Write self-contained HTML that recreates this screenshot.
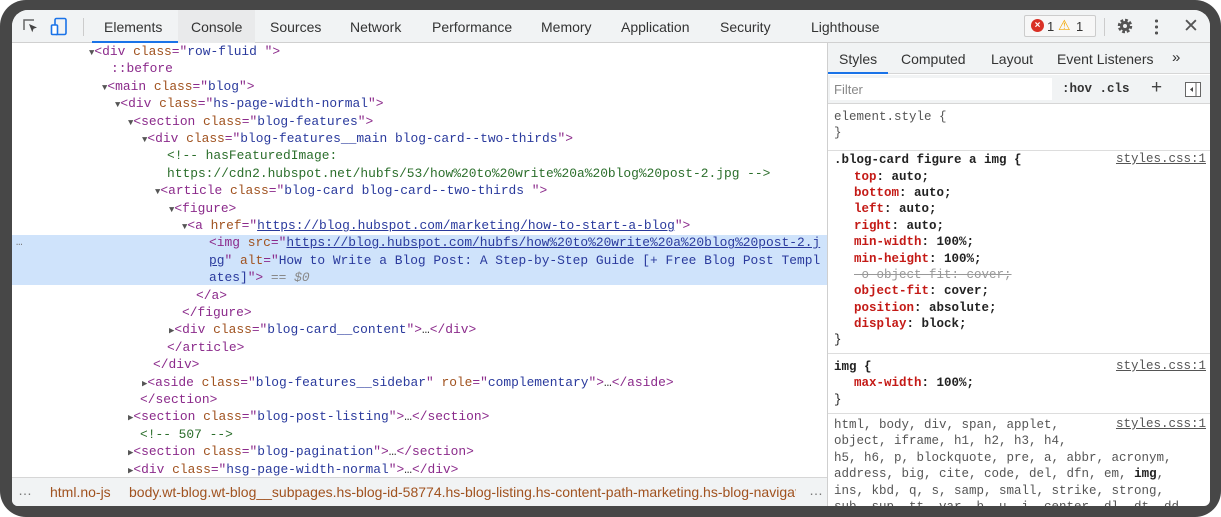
<!DOCTYPE html>
<html><head><meta charset="utf-8">
<style>
*{margin:0;padding:0;box-sizing:border-box}
body{width:1221px;height:517px;background:#fff;position:relative;overflow:hidden;font-family:"Liberation Sans",sans-serif}
.frame{position:absolute;left:0;top:0;width:1221px;height:517px;background:#474747;border-radius:26px}
.inner{position:absolute;left:12px;top:10px;width:1198px;height:496px;background:#fff;border-radius:16px 16px 6px 6px;overflow:hidden}
.tabs{position:absolute;left:0;top:0;width:1198px;height:33px;background:#f1f3f4;border-bottom:1px solid #d0d0d0}
.tab{position:absolute;top:9px;font-size:14px;color:#333}
.m{font-family:"Liberation Mono",monospace;font-size:12.9px;white-space:pre;position:absolute;line-height:17px;color:#333}
.t{color:#8b2a8b}.a{color:#a0521f}.v{color:#2a3a9d}.c{color:#2b6e2b}.u{color:#2a3a9d;text-decoration:underline}
.s{font-family:"Liberation Mono",monospace;font-size:12.5px;white-space:pre;position:absolute;line-height:16.4px;color:#222}
.p{color:#c41a16}
.tri{font-size:9px;color:#555}
.link{position:absolute;right:4px;text-decoration:underline;color:#555;font-family:"Liberation Mono",monospace;font-size:12.5px}
</style></head><body>
<div class="frame"></div>
<div class="inner">
 <div class="tabs">
  <svg style="position:absolute;left:10px;top:8px" width="18" height="18" viewBox="0 0 18 18"><path d="M2 12V2h10" fill="none" stroke="#666" stroke-width="1.5"/><path d="M7 6l8 3.5-3.5 1.2-1.2 3.5z" fill="#444"/></svg>
  <svg style="position:absolute;left:38px;top:7px" width="18" height="20" viewBox="0 0 18 20"><rect x="5" y="1.5" width="11" height="16" rx="1.5" fill="none" stroke="#1a73e8" stroke-width="1.6"/><rect x="1.5" y="8" width="6" height="9.5" rx="1" fill="#fff" stroke="#1a73e8" stroke-width="1.6"/></svg>
  <div style="position:absolute;left:71px;top:8px;width:1px;height:18px;background:#ccc"></div>
  <div class="tab" style="left:92px">Elements</div>
  <div style="position:absolute;left:80px;top:31px;width:86px;height:2px;background:#1a73e8"></div>
  <div style="position:absolute;left:166px;top:0;width:77px;height:33px;background:#e9eaeb"></div>
  <div class="tab" style="left:179px">Console</div>
  <div class="tab" style="left:258px">Sources</div>
  <div class="tab" style="left:338px">Network</div>
  <div class="tab" style="left:420px">Performance</div>
  <div class="tab" style="left:529px">Memory</div>
  <div class="tab" style="left:609px">Application</div>
  <div class="tab" style="left:708px">Security</div>
  <div class="tab" style="left:799px">Lighthouse</div>
  <div style="position:absolute;left:1012px;top:5px;width:72px;height:22px;border:1px solid #ccc;border-radius:2px;background:#f7f7f7;font-size:13px;color:#333">
   <span style="position:absolute;left:6px;top:3px;width:13px;height:13px;border-radius:50%;background:#d93025;color:#fff;font-size:10px;line-height:13px;text-align:center;font-weight:bold">×</span>
   <span style="position:absolute;left:22px;top:3px">1</span>
   <span style="position:absolute;left:33px;top:1px;color:#f2a600;font-size:14px">⚠</span>
   <span style="position:absolute;left:51px;top:3px">1</span>
  </div>
  <div style="position:absolute;left:1092px;top:8px;width:1px;height:18px;background:#ccc"></div>
  <svg style="position:absolute;left:1104px;top:7px" width="18" height="18" viewBox="0 0 18 18"><circle cx="9" cy="9" r="5.5" fill="none" stroke="#555" stroke-width="3.5" stroke-dasharray="2.6 1.7"/><circle cx="9" cy="9" r="5" fill="#555"/><circle cx="9" cy="9" r="2" fill="#f1f3f4"/></svg>
  <div style="position:absolute;left:1143px;top:8px;width:3px;height:17px;background:radial-gradient(circle,#555 1.5px,transparent 1.6px) 0 0/3px 6px"></div>
  <div style="position:absolute;left:1171px;top:5px;font-size:19px;color:#555">✕</div>
 </div>

 <div style="position:absolute;left:0;top:225px;width:815px;height:50px;background:#cfe3fb"></div>
 <div class="m" style="left:4px;top:225px;color:#777;font-size:11px">…</div>
 <div class="m" style="left:77px;top:33px"><span class="tri">▼</span><span class="t">&lt;div</span> <span class="a">class</span><span class="t">="</span><span class="v">row-fluid </span><span class="t">"&gt;</span></div>
 <div class="m" style="left:99px;top:50.4px;color:#8b2a8b">::before</div>
 <div class="m" style="left:90px;top:67.8px"><span class="tri">▼</span><span class="t">&lt;main</span> <span class="a">class</span><span class="t">="</span><span class="v">blog</span><span class="t">"&gt;</span></div>
 <div class="m" style="left:103px;top:85.2px"><span class="tri">▼</span><span class="t">&lt;div</span> <span class="a">class</span><span class="t">="</span><span class="v">hs-page-width-normal</span><span class="t">"&gt;</span></div>
 <div class="m" style="left:116px;top:102.6px"><span class="tri">▼</span><span class="t">&lt;section</span> <span class="a">class</span><span class="t">="</span><span class="v">blog-features</span><span class="t">"&gt;</span></div>
 <div class="m" style="left:130px;top:120px"><span class="tri">▼</span><span class="t">&lt;div</span> <span class="a">class</span><span class="t">="</span><span class="v">blog-features__main blog-card--two-thirds</span><span class="t">"&gt;</span></div>
 <div class="m c" style="left:155px;top:137.4px">&lt;!-- hasFeaturedImage:</div>
 <div class="m c" style="left:155px;top:154.8px">https://cdn2.hubspot.net/hubfs/53/how%20to%20write%20a%20blog%20post-2.jpg --&gt;</div>
 <div class="m" style="left:143px;top:172.2px"><span class="tri">▼</span><span class="t">&lt;article</span> <span class="a">class</span><span class="t">="</span><span class="v">blog-card blog-card--two-thirds </span><span class="t">"&gt;</span></div>
 <div class="m" style="left:157px;top:189.6px"><span class="tri">▼</span><span class="t">&lt;figure&gt;</span></div>
 <div class="m" style="left:170px;top:207px"><span class="tri">▼</span><span class="t">&lt;a</span> <span class="a">href</span><span class="t">="</span><span class="u">https://blog.hubspot.com/marketing/how-to-start-a-blog</span><span class="t">"&gt;</span></div>
 <div class="m" style="left:197px;top:224.4px"><span class="t">&lt;img</span> <span class="a">src</span><span class="t">="</span><span class="u">https://blog.hubspot.com/hubfs/how%20to%20write%20a%20blog%20post-2.j</span></div>
 <div class="m" style="left:197px;top:241.8px"><span class="u">pg</span><span class="t">"</span> <span class="a">alt</span><span class="t">="</span><span class="v">How to Write a Blog Post: A Step-by-Step Guide [+ Free Blog Post Templ</span></div>
 <div class="m" style="left:197px;top:259.2px"><span class="v">ates]</span><span class="t">"&gt;</span> <span style="color:#888;font-style:italic">== $0</span></div>
 <div class="m t" style="left:184px;top:276.6px">&lt;/a&gt;</div>
 <div class="m t" style="left:170px;top:294px">&lt;/figure&gt;</div>
 <div class="m" style="left:157px;top:311.4px"><span class="tri">▶</span><span class="t">&lt;div</span> <span class="a">class</span><span class="t">="</span><span class="v">blog-card__content</span><span class="t">"&gt;</span>…<span class="t">&lt;/div&gt;</span></div>
 <div class="m t" style="left:155px;top:328.8px">&lt;/article&gt;</div>
 <div class="m t" style="left:141px;top:346.2px">&lt;/div&gt;</div>
 <div class="m" style="left:130px;top:363.6px"><span class="tri">▶</span><span class="t">&lt;aside</span> <span class="a">class</span><span class="t">="</span><span class="v">blog-features__sidebar</span><span class="t">"</span> <span class="a">role</span><span class="t">="</span><span class="v">complementary</span><span class="t">"&gt;</span>…<span class="t">&lt;/aside&gt;</span></div>
 <div class="m t" style="left:128px;top:381px">&lt;/section&gt;</div>
 <div class="m" style="left:116px;top:398.4px"><span class="tri">▶</span><span class="t">&lt;section</span> <span class="a">class</span><span class="t">="</span><span class="v">blog-post-listing</span><span class="t">"&gt;</span>…<span class="t">&lt;/section&gt;</span></div>
 <div class="m c" style="left:128px;top:415.8px">&lt;!-- 507 --&gt;</div>
 <div class="m" style="left:116px;top:433.2px"><span class="tri">▶</span><span class="t">&lt;section</span> <span class="a">class</span><span class="t">="</span><span class="v">blog-pagination</span><span class="t">"&gt;</span>…<span class="t">&lt;/section&gt;</span></div>
 <div class="m" style="left:116px;top:450.6px"><span class="tri">▶</span><span class="t">&lt;div</span> <span class="a">class</span><span class="t">="</span><span class="v">hsg-page-width-normal</span><span class="t">"&gt;</span>…<span class="t">&lt;/div&gt;</span></div>

 <div style="position:absolute;left:0;top:467px;width:815px;height:29px;background:#f1f3f4;border-top:1px solid #d6d6d6;font-size:14px;color:#a0521f;white-space:nowrap;overflow:hidden">
  <span style="position:absolute;left:6px;top:4px;color:#777">…</span>
  <span style="position:absolute;left:38px;top:6px">html.no-js</span>
  <span style="position:absolute;left:117px;top:6px;width:667px;overflow:hidden">body.wt-blog.wt-blog__subpages.hs-blog-id-58774.hs-blog-listing.hs-content-path-marketing.hs-blog-navigation</span>
  <span style="position:absolute;left:797px;top:4px;color:#777">…</span>
 </div>

 <div style="position:absolute;left:815px;top:33px;width:1px;height:463px;background:#cfcfcf"></div>

 <div style="position:absolute;left:816px;top:33px;width:382px;height:31px;background:#f1f3f4;border-bottom:1px solid #d6d6d6;font-size:14px;color:#333">
  <span style="position:absolute;left:11px;top:8px">Styles</span>
  <div style="position:absolute;left:0;top:29px;width:60px;height:2px;background:#1a73e8"></div>
  <span style="position:absolute;left:73px;top:8px">Computed</span>
  <span style="position:absolute;left:163px;top:8px">Layout</span>
  <span style="position:absolute;left:229px;top:8px">Event Listeners</span>
  <span style="position:absolute;left:344px;top:6px;font-size:15px">»</span>
 </div>
 <div style="position:absolute;left:816px;top:65px;width:382px;height:29px;background:#f1f3f4;border-bottom:1px solid #d6d6d6">
  <div style="position:absolute;left:2px;top:3px;width:222px;height:22px;background:#fff;font-size:13px;color:#888;padding:4px 4px">Filter</div>
  <span style="position:absolute;left:234px;top:7px;font-family:'Liberation Mono',monospace;font-size:12.5px;font-weight:bold;color:#333">:hov  .cls</span>
  <span style="position:absolute;left:323px;top:2px;font-size:19px;color:#444">+</span>
  <svg style="position:absolute;left:357px;top:7px" width="16" height="15"><rect x="0.5" y="0.5" width="15" height="14" fill="#fff" stroke="#666"/><line x1="11" y1="1" x2="11" y2="14" stroke="#666"/><path d="M8 5l-3 2.5 3 2.5z" fill="#444"/></svg>
 </div>
 <div class="s" style="left:822px;top:99px;color:#555">element.style {
}</div>
 <div style="position:absolute;left:816px;top:140px;width:382px;height:1px;background:#ddd"></div>
 <div class="s" style="left:822px;top:142px;font-weight:bold">.blog-card figure a img {</div>
 <span class="link" style="top:142px">styles.css:1</span>
 <div class="s" style="left:842px;top:158.6px;font-weight:bold"><span class="p">top</span>: auto;
<span class="p">bottom</span>: auto;
<span class="p">left</span>: auto;
<span class="p">right</span>: auto;
<span class="p">min-width</span>: 100%;
<span class="p">min-height</span>: 100%;
<span style="color:#999;text-decoration:line-through;font-weight:normal">-o-object-fit: cover;</span>
<span class="p">object-fit</span>: cover;
<span class="p">position</span>: absolute;
<span class="p">display</span>: block;</div>
 <div class="s" style="left:822px;top:322px">}</div>
 <div style="position:absolute;left:816px;top:343px;width:382px;height:1px;background:#ddd"></div>
 <div class="s" style="left:822px;top:349px;font-weight:bold">img {</div>
 <span class="link" style="top:349px">styles.css:1</span>
 <div class="s" style="left:842px;top:365.4px;font-weight:bold"><span class="p">max-width</span>: 100%;</div>
 <div class="s" style="left:822px;top:381.8px">}</div>
 <div style="position:absolute;left:816px;top:403px;width:382px;height:1px;background:#ddd"></div>
 <div class="s" style="left:822px;top:407px;color:#555">html, body, div, span, applet,
object, iframe, h1, h2, h3, h4,
h5, h6, p, blockquote, pre, a, abbr, acronym,
address, big, cite, code, del, dfn, em, <b style="color:#222">img</b>,
ins, kbd, q, s, samp, small, strike, strong,
sub, sup, tt, var, b, u, i, center, dl, dt, dd,</div>
 <span class="link" style="top:407px">styles.css:1</span>
</div>
</body></html>
